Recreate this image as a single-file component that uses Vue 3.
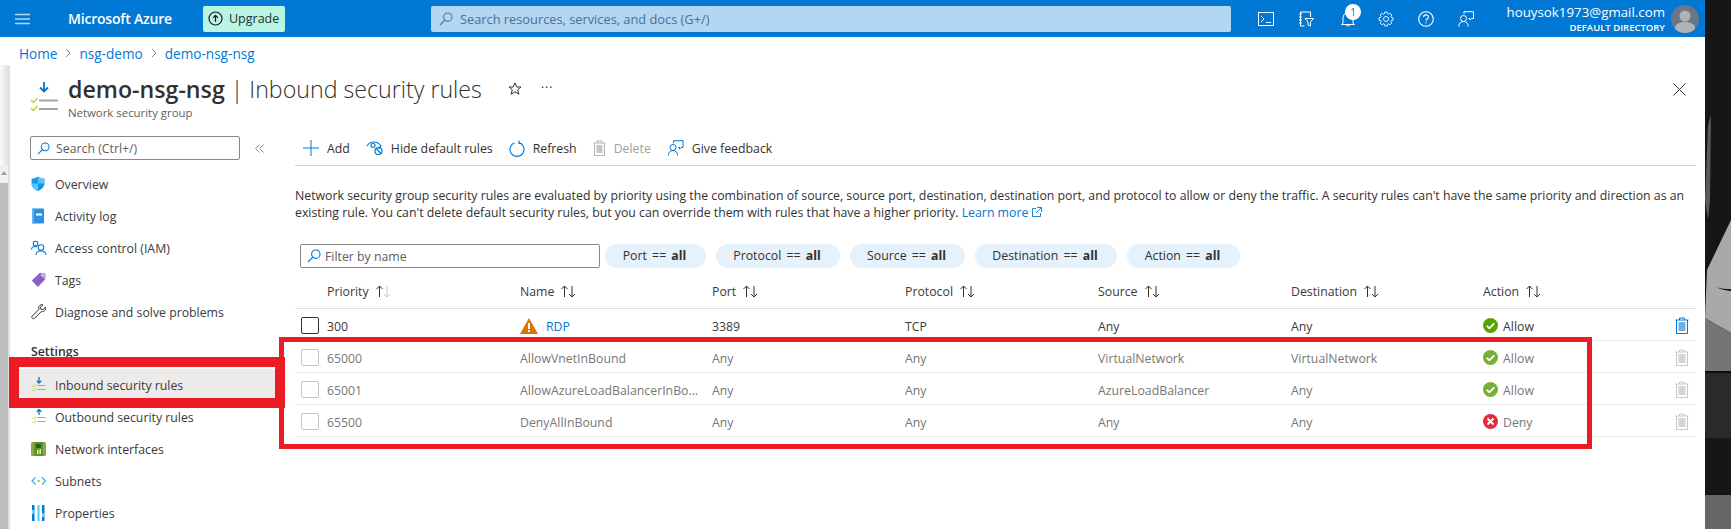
<script setup>
const gear = (() => {
  const pts = [];
  for (let i = 0; i < 8; i++) {
    const a = (i * Math.PI) / 4;
    [[-0.3, 6.1], [-0.17, 8], [0.17, 8], [0.3, 6.1]].forEach(([d, r]) => {
      pts.push(`${(9 + r * Math.cos(a + d)).toFixed(2)},${(9 + r * Math.sin(a + d)).toFixed(2)}`);
    });
  }
  return pts.join(" ");
})();

const nav = [
  { label: "Overview", icon: "shield" },
  { label: "Activity log", icon: "log" },
  { label: "Access control (IAM)", icon: "iam" },
  { label: "Tags", icon: "tag" },
  { label: "Diagnose and solve problems", icon: "wrench" },
];

const settings = [
  { label: "Inbound security rules", icon: "inbound", active: true },
  { label: "Outbound security rules", icon: "outbound" },
  { label: "Network interfaces", icon: "nic" },
  { label: "Subnets", icon: "subnet" },
  { label: "Properties", icon: "props" },
];

const rulesIcon = (arrow) => `
  <path d="M8 ${arrow}" fill="none" stroke="#0078d4" stroke-width="1.3"/>
  <path d="M6.5 8.5h8M6.5 12.5h8" stroke="#a5a5a5" stroke-width="1.2"/>
  <path d="M1 8.5l1.4 1.4L5 7.6M1 12.5l1.4 1.4L5 11.6" fill="none" stroke="#b5d334" stroke-width="1"/>`;

const icons = {
  shield: `<path d="M7 .5C5 2 3 2.6.6 2.7v5C.6 11 3.500 13.400 7 15c3.500-1.600 6.400-4 6.400-7.300v-5C11 2.600 9 2 7 .5z" fill="#1b93eb"/><path d="M7 .5v7H.6C.6 11 3.500 13.400 7 15V7.500h6.400v-4.800C11 2.600 9 2 7 .5z" fill="#50c8f5"/>`,
  log: `<rect x="1" y=".5" width="12" height="15" rx="1" fill="#2d8fe0"/><rect x="1" y=".5" width="2" height="15" fill="#5cb2f0"/><rect x="5" y="5.500" width="6" height="2" fill="#fff"/>`,
  iam: `<g fill="none" stroke="#0078d4" stroke-width="1.100"><circle cx="4.500" cy="3.500" r="2.300"/><path d="M.6 9.500c0-2 1.400-3 3.400-3 .8 0 1.400.2 1.900.5"/><circle cx="10" cy="7.500" r="2.800"/><path d="M5 15c0-2.800 2-4 5-4s5 1.200 5 4"/></g>`,
  tag: `<path d="M9 .8l5.400 1-.3 5.700L6.800 15 .8 8.500z" fill="#8661c5"/><path d="M9 .8l5.400 1-.3 5.700-4-3.600z" fill="#b79ce8"/><circle cx="11.500" cy="3.600" r="1" fill="#e6dcf7"/>`,
  wrench: `<path d="M14.500 3.200l-2.600 2.500-2-.5-.5-2L12 .8c-2-.7-4.300.8-4.300 3 0 .6.100 1 .3 1.500L1.300 12c-.7.7-.7 1.700 0 2.300.6.600 1.600.6 2.200 0l6.800-6.700c2.500.8 4.800-1.700 4.200-4.400z" fill="none" stroke="#323130"/>`,
  inbound: rulesIcon("0v5.500M5.700 3.700L8 6l2.300-2.300"),
  outbound: rulesIcon("6V.5M5.700 2.800L8 .5l2.300 2.300"),
  nic: `<rect x="0" y="1" width="15" height="14" rx="1.500" fill="#8aa84a"/><rect x="3" y="1" width="9" height="14" fill="#5e9624"/><rect x="5" y="3" width="5" height="4" fill="#2f5d1e"/><rect x="6" y="9" width="1.500" height="4" fill="#dfeac3"/><rect x="8.500" y="8" width="1.500" height="5" fill="#dfeac3"/>`,
  subnet: `<path d="M4.500 4.500L1 8l3.500 3.500" fill="none" stroke="#32b0ea" stroke-width="1.200"/><path d="M11 4.500L14.500 8 11 11.500" fill="none" stroke="#32b0ea" stroke-width="1.200"/><circle cx="7.700" cy="8" r="1" fill="#7fba00"/>`,
  props: `<rect x="1" y="0" width="2.500" height="16" fill="#0078d4"/><rect x="1" y="5" width="2.500" height="4" fill="#83c8f5"/><rect x="6.500" y="0" width="2" height="16" fill="#50c8f5"/><rect x="11" y="0" width="2.500" height="16" fill="#0078d4"/><rect x="11" y="8" width="2.500" height="4" fill="#83c8f5"/>`,
};

const filters = [
  { label: "Port", width: 101 },
  { label: "Protocol", width: 124 },
  { label: "Source", width: 115 },
  { label: "Destination", width: 142 },
  { label: "Action", width: 113 },
];

const columns = ["Priority", "Name", "Port", "Protocol", "Source", "Destination", "Action"];

const rows = [
  { priority: "300", name: "RDP", port: "3389", protocol: "TCP", source: "Any", destination: "Any", action: "Allow", custom: true },
  { priority: "65000", name: "AllowVnetInBound", port: "Any", protocol: "Any", source: "VirtualNetwork", destination: "VirtualNetwork", action: "Allow" },
  { priority: "65001", name: "AllowAzureLoadBalancerInBound", port: "Any", protocol: "Any", source: "AzureLoadBalancer", destination: "Any", action: "Allow" },
  { priority: "65500", name: "DenyAllInBound", port: "Any", protocol: "Any", source: "Any", destination: "Any", action: "Deny" },
];
</script>

<template>
  <div class="screen">
    <div class="page">
      <header class="topbar">
        <svg class="hamburger" width="15" height="12" viewBox="0 0 15 12">
          <path d="M0 1.500h15M0 6h15M0 10.500h15" stroke="#b3d6f2" stroke-width="1.300" />
        </svg>
        <span class="brand">Microsoft Azure</span>
        <button class="upgrade">
          <svg width="15" height="15" viewBox="0 0 15 15" fill="none" stroke="#1b1b1b" stroke-width="1.200">
            <circle cx="7.500" cy="7.500" r="6.500" />
            <path d="M7.500 11V4.500M5 6.800l2.500-2.500L10 6.800" />
          </svg>
          Upgrade
        </button>
        <div class="global-search">
          <svg width="14" height="14" viewBox="0 0 14 14" fill="none" stroke="#3f78ad" stroke-width="1.100">
            <circle cx="8.800" cy="5.200" r="4.200" />
            <path d="M5.800 8.200L1 13" />
          </svg>
          <span>Search resources, services, and docs (G+/)</span>
        </div>
        <div class="top-icons">
          <svg width="16" height="16" viewBox="0 0 16 16" fill="none" stroke="#fff" stroke-width="1">
            <rect x=".5" y="1.500" width="15" height="13" />
            <path d="M3 5l3 3-3 3M8 11.500h5" />
          </svg>
          <svg width="16" height="16" viewBox="0 0 16 16" fill="none" stroke="#fff" stroke-width="1">
            <path d="M2.500 1h10v5M2.500 1v14h4M1 3h3M1 6h3M1 9h3M1 12h3" />
            <path d="M7 7.500h8.500l-3 3.500v4l-2.500-1v-3z" />
          </svg>
          <div class="bell">
            <svg width="16" height="16" viewBox="0 0 16 16" fill="none" stroke="#fff" stroke-width="1">
              <path d="M3 12V7c0-3 2-5.500 5-5.500S13 4 13 7v5l1.500 1.500h-13zM6 13.500c0 2 4 2 4 0" />
            </svg>
            <span class="badge">1</span>
          </div>
          <svg width="16" height="16" viewBox="0 0 18 18" fill="none" stroke="#fff" stroke-width="1">
            <polygon :points="gear" />
            <circle cx="9" cy="9" r="2.800" />
          </svg>
          <svg width="16" height="16" viewBox="0 0 16 16" fill="none" stroke="#fff" stroke-width="1.100">
            <circle cx="8" cy="8" r="7.300" />
            <path d="M5.600 6.100c0-3 4.800-3 4.800 0 0 1.900-2.400 1.800-2.400 3.700M8 11v1.300" />
          </svg>
          <svg width="16" height="16" viewBox="0 0 16 16" fill="none" stroke="#fff" stroke-width="1">
            <path d="M6 3V.7h9.500v6.800h-2l-1.500 1.600V7.500h-1.500" />
            <circle cx="5.500" cy="7.500" r="3" />
            <path d="M.8 15.500c0-3 2-5 4.700-5s4.700 2 4.700 5" />
          </svg>
        </div>
        <div class="account">
          <div class="email">houysok1973@gmail.com</div>
          <div class="directory">DEFAULT DIRECTORY</div>
        </div>
        <svg class="avatar" width="28" height="28" viewBox="0 0 28 28">
          <circle cx="14" cy="14" r="14" fill="#6b7785" />
          <circle cx="14" cy="11" r="5.500" fill="#b0b3b6" />
          <path d="M4 24c0-5 4-7 10-7s10 2 10 7c-2.500 2.600-6 4-10 4s-7.500-1.400-10-4z" fill="#b0b3b6" />
        </svg>
      </header>

      <nav class="crumbs">
        <a>Home</a>
        <svg width="6" height="10" viewBox="0 0 6 10" fill="none" stroke="#8a8886"><path d="M1 1l4 4-4 4" /></svg>
        <a>nsg-demo</a>
        <svg width="6" height="10" viewBox="0 0 6 10" fill="none" stroke="#8a8886"><path d="M1 1l4 4-4 4" /></svg>
        <a>demo-nsg-nsg</a>
      </nav>

      <div class="body">
        <div class="left-strip">
          <div class="scroll-track"><span class="scroll-arrow"></span></div>
          <div class="scroll-thumb"></div>
        </div>

        <section class="blade">
          <div class="blade-head">
            <svg class="blade-icon" width="28" height="30" viewBox="0 0 28 30" fill="none">
              <path d="M14 0v9M10 5.500L14 9.500l4-4" stroke="#0078d4" stroke-width="1.800" />
              <path d="M9 18.500h19M9 27h19" stroke="#a5a5a5" stroke-width="2" />
              <path d="M1 18l2.500 2.500L7.500 16M1 26l2.500 2.500L7.500 24" stroke="#b5d334" stroke-width="1.400" />
            </svg>
            <div class="blade-titles">
              <h1><strong>demo-nsg-nsg</strong> | Inbound security rules</h1>
              <p>Network security group</p>
            </div>
            <svg class="star" width="14" height="14" viewBox="0 0 14 14" fill="none" stroke="#323130">
              <path d="M7 1l1.800 4h4.200l-3.300 2.800 1.200 4.400L7 9.800l-3.900 2.400 1.200-4.400L1 5h4.200z" />
            </svg>
            <span class="more">···</span>
            <svg class="close" width="13" height="13" viewBox="0 0 13 13" stroke="#323130"><path d="M.5.500l12 12M12.500.500l-12 12" /></svg>
          </div>

          <div class="columns">
            <aside class="sidebar">
              <div class="side-top">
                <div class="side-search">
                  <svg width="13" height="13" viewBox="0 0 14 14" fill="none" stroke="#0078d4" stroke-width="1.100">
                    <circle cx="8.800" cy="5.200" r="4.200" />
                    <path d="M5.800 8.200L1 13" />
                  </svg>
                  <span>Search (Ctrl+/)</span>
                </div>
                <svg class="collapse" width="9" height="9" viewBox="0 0 9 9" fill="none" stroke="#8a8886"><path d="M4.500.500L.5 4.500l4 4M8.500.500l-4 4 4 4" /></svg>
              </div>
              <a v-for="item in nav" :key="item.label" class="nav-item">
                <svg class="nav-icon" width="16" height="16" viewBox="0 0 16 16" v-html="icons[item.icon]"></svg>
                {{ item.label }}
              </a>
              <div class="nav-group">Settings</div>
              <a v-for="item in settings" :key="item.label" class="nav-item" :class="{ active: item.active }">
                <svg class="nav-icon" width="16" height="16" viewBox="0 0 16 16" v-html="icons[item.icon]"></svg>
                {{ item.label }}
              </a>
            </aside>

            <main class="content">
              <div class="toolbar">
                <span class="tool">
                  <svg width="16" height="16" viewBox="0 0 16 16" stroke="#0078d4" stroke-width="1"><path d="M8 0v16M0 8h16" /></svg>
                  Add
                </span>
                <span class="tool">
                  <svg width="17" height="14" viewBox="0 0 17 14" fill="none" stroke="#0078d4" stroke-width="1.200">
                    <path d="M.8 5C3 2 5.500 1 8 1s5 1 7 4c-1 1.200-2 2-3 2.700" />
                    <circle cx="7" cy="4.500" r="2" />
                    <circle cx="12.500" cy="10" r="3.500" />
                    <path d="M10 7.500l5 5" />
                  </svg>
                  Hide default rules
                </span>
                <span class="tool">
                  <svg width="16" height="17" viewBox="0 0 16 17" fill="none" stroke="#0078d4" stroke-width="1.100">
                    <path d="M5.500 2.800a7 7 0 1 0 5 0M10 .500v3h3" />
                  </svg>
                  Refresh
                </span>
                <span class="tool disabled">
                  <svg width="13" height="16" viewBox="0 0 13 16" fill="none" stroke="#b5b3b1">
                    <path d="M.5 3h12M4 3V1h5v2M1.500 3v12.500h10V3" />
                    <rect x="3.500" y="5" width="6" height="8" fill="#c8c6c4" stroke="none" />
                  </svg>
                  Delete
                </span>
                <span class="tool">
                  <svg width="17" height="16" viewBox="0 0 16 16" fill="none" stroke="#0078d4" stroke-width="1">
                    <path d="M6 3V.7h9.500v6.800h-2l-1.500 1.600V7.500h-1.500" />
                    <circle cx="5.500" cy="7.500" r="3" />
                    <path d="M.8 15.500c0-3 2-5 4.700-5s4.700 2 4.700 5" />
                  </svg>
                  Give feedback
                </span>
              </div>

              <p class="intro">
                Network security group security rules are evaluated by priority using the combination of source, source port, destination, destination port, and protocol to allow or deny the traffic. A security rules can't have the same priority and direction as an<br />
                existing rule. You can't delete default security rules, but you can override them with rules that have a higher priority.
                <a class="link">Learn more
                  <svg width="10" height="10" viewBox="0 0 10 10" fill="none" stroke="#0078d4" stroke-width=".9"><path d="M4 1.500H.5v8h8V6M5 .500h4.500V5M9.500.500L4 6" /></svg>
                </a>
              </p>

              <div class="filters">
                <div class="filter-box">
                  <svg width="14" height="14" viewBox="0 0 14 14" fill="none" stroke="#0078d4" stroke-width="1.100">
                    <circle cx="8.800" cy="5.200" r="4.200" />
                    <path d="M5.800 8.200L1 13" />
                  </svg>
                  <span>Filter by name</span>
                </div>
                <span v-for="f in filters" :key="f.label" class="pill" :style="{ width: f.width + 'px' }">{{ f.label }} == <b>all</b></span>
              </div>

              <div class="table">
                <div class="row head">
                  <span class="check-cell"></span>
                  <span v-for="(col, i) in columns" :key="col" class="col-title">
                    {{ col }}
                    <svg width="17" height="13" viewBox="0 0 17 13" fill="none" stroke-width="1">
                      <path d="M4.500 12V1M1.500 4l3-3 3 3" stroke="#323130" />
                      <path d="M12 1v11M9 9l3 3 3-3" :stroke="i === 0 ? '#c8c6c4' : '#323130'" />
                    </svg>
                  </span>
                </div>
                <div v-for="r in rows" :key="r.priority" class="row" :class="{ muted: !r.custom }">
                  <span class="check-cell"><span class="check"></span></span>
                  <span>{{ r.priority }}</span>
                  <span class="name-cell">
                    <svg v-if="r.custom" class="warn" width="18" height="16" viewBox="0 0 18 16">
                      <path d="M9 0l9 16H0z" fill="#db7500" />
                      <path d="M8 5h2v6H8zM8 12h2v2H8z" fill="#fff" />
                    </svg>
                    <a v-if="r.custom" class="link">{{ r.name }}</a>
                    <span v-else class="ellipsis">{{ r.name }}</span>
                  </span>
                  <span>{{ r.port }}</span>
                  <span>{{ r.protocol }}</span>
                  <span>{{ r.source }}</span>
                  <span>{{ r.destination }}</span>
                  <span class="action-cell">
                    <svg class="status" width="15" height="15" viewBox="0 0 15 15">
                      <circle cx="7.500" cy="7.500" r="7.500" :fill="r.action === 'Deny' ? '#e8293f' : r.custom ? '#57a300' : '#74b136'" />
                      <path v-if="r.action === 'Allow'" d="M3.800 7.800l2.600 2.500 4.800-5" fill="none" stroke="#fff" stroke-width="1.800" />
                      <path v-else d="M4.500 4.500l6 6M10.500 4.500l-6 6" stroke="#fff" stroke-width="1.800" />
                    </svg>
                    {{ r.action }}
                    <svg class="trash" width="14" height="17" viewBox="0 0 14 17" fill="none" :stroke="r.custom ? '#0078d4' : '#c8c6c4'">
                      <path d="M.5 3h13M4.500 3V1h5v2M1.500 3v13.500h11V3" />
                      <rect x="3.500" y="5" width="7" height="9" :fill="r.custom ? '#70b0e8' : '#d6d4d2'" stroke="none" />
                    </svg>
                  </span>
                </div>
              </div>
            </main>
          </div>
        </section>
      </div>

      <div class="mark mark-nav"></div>
      <div class="mark mark-rows"></div>
    </div>

    <svg class="wallpaper" width="26" height="529" viewBox="1705 0 26 529" preserveAspectRatio="none">
      <rect x="1705" y="0" width="26" height="529" fill="#161616" />
      <path d="M1705 200l3-75 3-10-1 85-2 20z" fill="#5a5a5a" />
      <path d="M1731 220l-24 50-2 48 26 15z" fill="#a9a9a9" />
      <path d="M1716 287c5 3 10 3 15 4v-2c-5 0-10 0-15-2z" fill="#111" />
      <path d="M1705 318l26 15v39h-26z" fill="#757575" />
      <rect x="1705" y="371" width="26" height="2" fill="#0c0c0c" />
      <rect x="1705" y="373" width="26" height="65" fill="#2a2a2a" />
      <rect x="1705" y="495" width="26" height="34" fill="#666" />
    </svg>
  </div>
</template>

<style>
html,
body {
  margin: 0;
  background: #161616;
}
</style>

<style scoped>
.screen {
  display: flex;
  height: 529px;
  overflow: hidden;
  font-family: "Open Sans", "Noto Sans", "Liberation Sans", sans-serif;
  font-size: 12.3px;
  color: #323130;
}

.page {
  position: relative;
  display: flex;
  flex-direction: column;
  width: 1705px;
  flex: none;
  background: #fff;
  overflow: hidden;
}

.wallpaper {
  flex: none;
}

.topbar {
  display: flex;
  align-items: center;
  height: 37px;
  flex: none;
  background: #0078d4;
  color: #fff;
}

.hamburger {
  margin-left: 15px;
}

.brand {
  margin-left: 38px;
  width: 135px;
  font-size: 14px;
  font-weight: 600;
  letter-spacing: -0.2px;
}

.upgrade {
  display: flex;
  align-items: center;
  gap: 6px;
  width: 82px;
  height: 26px;
  padding: 0 0 0 5px;
  border: 0;
  border-radius: 2px;
  background: #b9f5e4;
  color: #1f2f2a;
  font: inherit;
  font-size: 12.5px;
}

.global-search {
  display: flex;
  align-items: center;
  gap: 7px;
  width: 800px;
  height: 26px;
  margin-left: 146px;
  padding-left: 8px;
  box-sizing: border-box;
  border-radius: 2px;
  background: #b3d6f2;
  color: #44729b;
  font-size: 12.8px;
}

.top-icons {
  display: flex;
  align-items: center;
  gap: 24px;
  margin-left: 27px;
}

.bell {
  position: relative;
  display: flex;
  margin-left: 2px;
  margin-right: -2px;
}

.badge {
  position: absolute;
  top: -7px;
  left: 5px;
  width: 16px;
  height: 16px;
  border-radius: 50%;
  background: #fff;
  color: #0078d4;
  font-size: 10px;
  line-height: 16px;
  text-align: center;
}

.account {
  margin-left: auto;
  text-align: right;
}

.email {
  font-size: 13.3px;
  line-height: 17px;
}

.directory {
  font-size: 9.5px;
  font-weight: 600;
  line-height: 13px;
}

.avatar {
  margin: 0 6px;
}

.crumbs {
  display: flex;
  align-items: center;
  gap: 8px;
  height: 28px;
  flex: none;
  padding: 4px 0 0 19px;
  box-sizing: border-box;
  font-size: 13.6px;
}

.crumbs a,
.link {
  color: #0078d4;
}

.body {
  display: flex;
  flex: 1;
  min-height: 0;
}

.left-strip {
  width: 10px;
  flex: none;
  padding-top: 100px;
  background: linear-gradient(to right, #fafafa, #dcdcdc);
}

.scroll-track {
  display: flex;
  justify-content: center;
  width: 8px;
  height: 18px;
  background: #f0f0f0;
}

.scroll-arrow {
  width: 0;
  height: 0;
  margin-top: 6px;
  border: 3px solid transparent;
  border-top: 0;
  border-bottom: 4px solid #a0a0a0;
}

.scroll-thumb {
  width: 8px;
  height: 400px;
  background: #bdbdbd;
}

.blade {
  flex: 1;
  min-width: 0;
  display: flex;
  flex-direction: column;
}

.blade-head {
  display: flex;
  align-items: flex-start;
  height: 66px;
  flex: none;
  padding-top: 12px;
  box-sizing: border-box;
}

.blade-icon {
  margin: 5px 0 0 20px;
}

.blade-titles {
  margin-left: 10px;
}

h1 {
  margin: 0;
  font-size: 23.2px;
  font-weight: 300;
  line-height: 24px;
}

h1 strong {
  font-weight: 600;
}

.blade-titles p {
  margin: 4px 0 0;
  font-size: 11.4px;
  color: #605e5c;
}

.star {
  margin: 5px 0 0 26px;
}

.more {
  margin: 2px 0 0 19px;
  font-size: 12px;
  letter-spacing: 1px;
}

.close {
  margin: 6px 19px 0 auto;
}

.columns {
  display: flex;
  flex: 1;
  min-height: 0;
}

.sidebar {
  width: 285px;
  flex: none;
  padding-left: 9px;
  box-sizing: border-box;
}

.side-top {
  display: flex;
  align-items: center;
  height: 37px;
  padding: 5px 0 8px 11px;
  box-sizing: border-box;
}

.side-search {
  display: flex;
  align-items: center;
  gap: 6px;
  width: 210px;
  height: 24px;
  padding-left: 6px;
  box-sizing: border-box;
  border: 1px solid #8a8886;
  border-radius: 2px;
  color: #605e5c;
}

.collapse {
  margin-left: 15px;
}

.nav-item {
  display: flex;
  align-items: center;
  gap: 8px;
  width: 256px;
  height: 32px;
  padding-left: 12px;
  box-sizing: border-box;
  color: #3b3a39;
}

.nav-item.active {
  background: #edebe9;
}

.nav-icon {
  flex: none;
}

.nav-group {
  height: 41px;
  padding: 15px 0 0 12px;
  box-sizing: border-box;
  font-weight: 600;
  color: #323130;
}

.content {
  flex: 1;
  min-width: 0;
  padding-right: 9px;
}

.toolbar {
  display: flex;
  align-items: center;
  height: 35px;
  padding: 0 0 0 8px;
  box-sizing: border-box;
  border-bottom: 1px solid #d2d0ce;
}

.tool {
  display: flex;
  align-items: center;
  gap: 8px;
  margin-right: 16px;
  color: #323130;
}

.tool.disabled {
  color: #a19f9d;
}

.intro {
  margin: 21px 0 0;
  line-height: 17px;
  white-space: nowrap;
}

.filters {
  display: flex;
  gap: 10px;
  margin: 23px 0 0 5px;
}

.filter-box {
  display: flex;
  align-items: center;
  gap: 4px;
  width: 300px;
  height: 24px;
  margin-right: -5px;
  padding-left: 6px;
  box-sizing: border-box;
  border: 1px solid #8a8886;
  border-radius: 2px;
  color: #605e5c;
}

.pill {
  height: 24px;
  border-radius: 12px;
  background: #e5f1fb;
  line-height: 24px;
  text-align: center;
  white-space: pre;
  word-spacing: 2px;
  padding-right: 2px;
  box-sizing: border-box;
}

.pill b {
  font-weight: 700;
}

.row {
  display: grid;
  grid-template-columns: 32px 193px 192px 193px 193px 193px 192px 1fr;
  align-items: center;
  height: 32px;
  padding-top: 3px;
  box-sizing: border-box;
  border-bottom: 1px solid #edebe9;
  color: #3b3a39;
}

.row.head {
  height: 41px;
  padding-top: 6px;
  border-bottom-color: #e1dfdd;
  font-weight: 500;
}

.row.muted {
  color: #797775;
}

.col-title {
  display: flex;
  align-items: center;
  gap: 6px;
}

.check-cell {
  padding-left: 6px;
  display: flex;
  margin-top: -2px;
}

.check {
  width: 18px;
  height: 17px;
  box-sizing: border-box;
  border: 1px solid #323130;
  border-radius: 2px;
}

.muted .check {
  border-color: #c8c6c4;
}

.name-cell {
  display: flex;
  align-items: center;
  gap: 8px;
  min-width: 0;
}

.ellipsis {
  overflow: hidden;
  text-overflow: ellipsis;
  white-space: nowrap;
  padding-right: 12px;
}

.action-cell {
  display: flex;
  align-items: center;
  gap: 5px;
}

.status {
  margin-top: -1px;
}

.trash {
  margin: -2px 7px 0 auto;
}

.mark {
  position: absolute;
  box-sizing: border-box;
  pointer-events: none;
}

.mark-nav {
  left: 9px;
  top: 357px;
  width: 276px;
  height: 51px;
  border: 10px solid #ed1c24;
}

.mark-rows {
  left: 279px;
  top: 337px;
  width: 1313px;
  height: 112px;
  border: 5px solid #ed1c24;
}
</style>
